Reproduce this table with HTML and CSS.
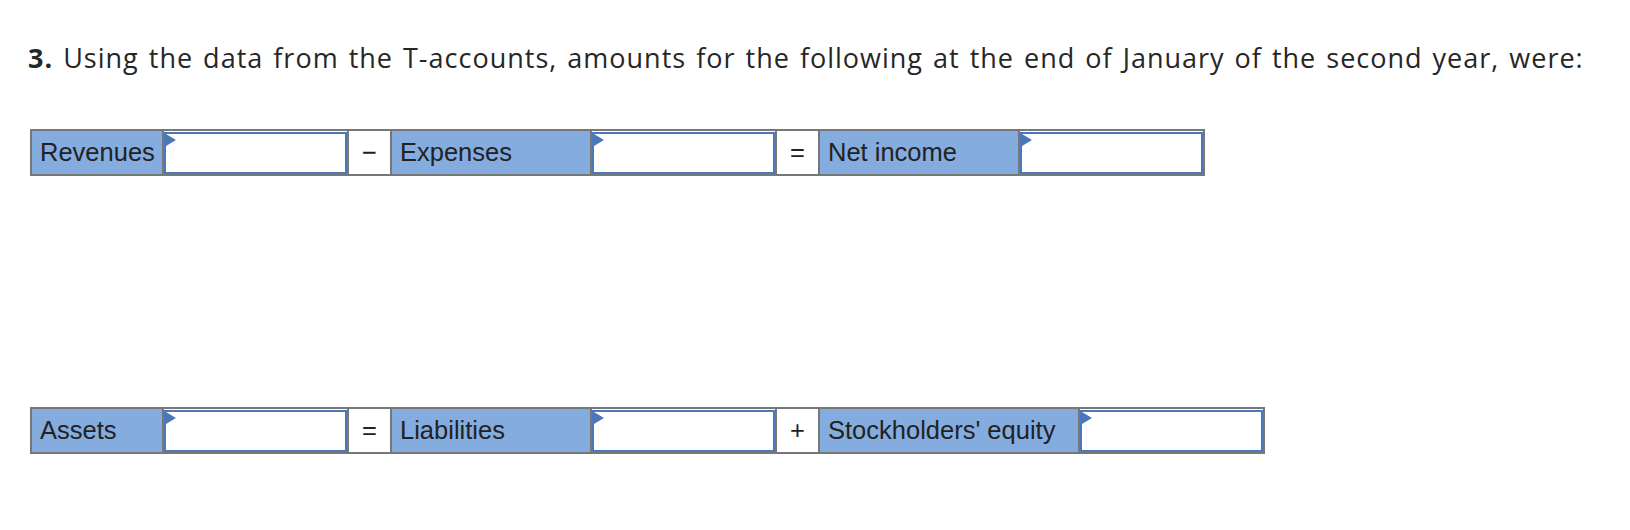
FILE: index.html
```html
<!DOCTYPE html>
<html lang="en">
<head>
<meta charset="utf-8">
<title>T-accounts</title>
<link rel="stylesheet" href="styles.css">
</head>
<body>
<main class="page">
  <p class="question"><b>3.</b> Using the data from the T-accounts, amounts for the following at the end of January of the second year, were:</p>

  <div class="equation eq-first">
    <div class="label w-first">Revenues</div>
    <div class="slot"><div class="field"><span class="flag"></span></div></div>
    <div class="op">−</div>
    <div class="label w-mid">Expenses</div>
    <div class="slot"><div class="field"><span class="flag"></span></div></div>
    <div class="op">=</div>
    <div class="label w-mid">Net income</div>
    <div class="slot"><div class="field"><span class="flag"></span></div></div>
  </div>

  <div class="equation eq-second">
    <div class="label w-first">Assets</div>
    <div class="slot"><div class="field"><span class="flag"></span></div></div>
    <div class="op">=</div>
    <div class="label w-mid">Liabilities</div>
    <div class="slot"><div class="field"><span class="flag"></span></div></div>
    <div class="op">+</div>
    <div class="label w-wide">Stockholders' equity</div>
    <div class="slot"><div class="field"><span class="flag"></span></div></div>
  </div>
</main>
</body>
</html>
```

FILE: styles.css
```css
html, body {
  margin: 0;
  padding: 0;
  background: #ffffff;
}

.page {
  padding: 42px 0 0 28px;
}

.question {
  margin: 0;
  font-family: "Open Sans", Lato, sans-serif;
  font-size: 27px;
  line-height: 32px;
  letter-spacing: 1px;
  word-spacing: 2px;
  color: #262626;
}

.question b {
  font-weight: 700;
}

.equation {
  display: flex;
  width: max-content;
  border: 2px solid #777777;
  height: 43px;
  margin-left: 2px;
  font-family: "Liberation Sans", Arial, sans-serif;
  font-size: 25.5px;
  color: #222222;
}

.eq-first {
  margin-top: 55px;
}

.eq-second {
  margin-top: 231px;
}

.equation > div {
  flex: none;
}

.equation > div + div {
  border-left: 2px solid #777777;
}

.label {
  background: #84acdf;
  display: flex;
  align-items: center;
  padding-left: 8px;
}

.w-first { width: 122px; }
.w-mid { width: 190px; }
.w-wide { width: 250px; }

.slot {
  width: 183px;
  padding-top: 1px;
  background: #ffffff;
  display: flex;
}

.field {
  position: relative;
  flex: 1;
  border: 2px solid #4b78ba;
  background: #ffffff;
}

.flag {
  position: absolute;
  left: 0;
  top: 0;
  width: 0;
  height: 0;
  border-top: 6px solid transparent;
  border-bottom: 6px solid transparent;
  border-left: 10px solid #4a77b9;
}

.op {
  width: 41px;
  display: flex;
  align-items: center;
  justify-content: center;
  background: #ffffff;
}
```
